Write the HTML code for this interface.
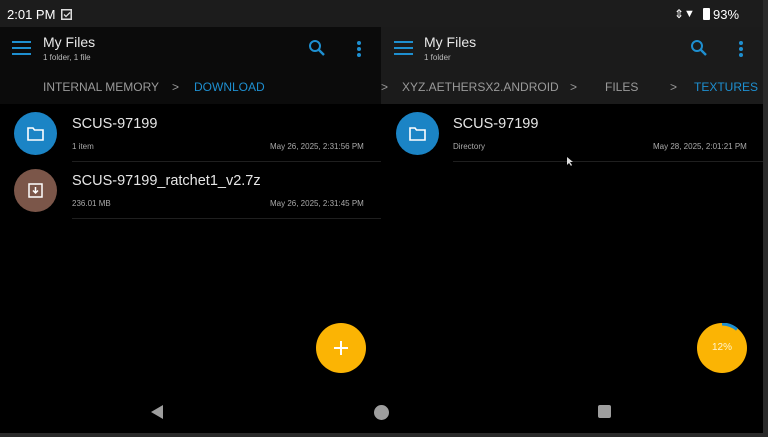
<!DOCTYPE html>
<html><head><style>
*{margin:0;padding:0;box-sizing:border-box}
body{width:768px;height:437px;background:#000;font-family:"Liberation Sans",sans-serif;position:relative;overflow:hidden;color:#e8e8e8}
.a{position:absolute}
.sb{left:0;top:0;width:768px;height:27px;background:#1c1c1c}
.rh{left:381px;top:27px;width:382px;height:77px;background:#1b1b1b}
.lh{left:0;top:27px;width:381px;height:77px;background:#0b0b0b}
.edge{left:763px;top:0;width:5px;height:437px;background:#2a2a2a}
.bot{left:0;top:433px;width:768px;height:4px;background:#2a2a2a}
.ham{width:19px;height:14px;border-top:2px solid #1e8fd0;border-bottom:2px solid #1e8fd0}
.ham:after{content:"";position:absolute;left:0;top:4px;width:19px;height:2px;background:#1e8fd0}
.t{font-size:14px;color:#e8e8e8}
.s{font-size:8px;color:#bbb}
.bc{font-size:12px;color:#9a9a9a;top:80px}
.blue{color:#1e8fd0}
.circ{width:43px;height:43px;border-radius:50%}
.nm{font-size:14.5px;color:#e6e6e6}
.meta{font-size:8px;color:#aaa}
.line{height:1px;background:#1f1f1f}
.dots i{display:block;width:4px;height:4px;border-radius:50%;background:#1e8fd0;margin-bottom:2px}
.fab{width:50px;height:50px;border-radius:50%;background:#fbb404}
</style></head><body>
<div class="a sb"></div>
<div class="a lh"></div>
<div class="a rh"></div>
<div class="a edge"></div>
<div class="a bot"></div>
<div class="a" style="left:7px;top:7px;font-size:13px;color:#fff">2:01 PM</div>
<svg class="a" style="left:61px;top:9px" width="11" height="11"><rect x="0.75" y="0.75" width="9.5" height="9.5" fill="none" stroke="#ddd" stroke-width="1.5"/><path d="M3 5.5l2 2 4-4" stroke="#ddd" stroke-width="1.3" fill="none"/></svg>
<div class="a" style="left:674px;top:7px;font-size:12px;color:#fff">⇕</div>
<div class="a" style="left:684px;top:8px;font-size:11px;color:#fff">▼</div>
<div class="a" style="left:703px;top:8px;width:7px;height:12px;background:#fff;border-radius:1px"></div>
<div class="a" style="left:713px;top:7px;font-size:13px;color:#fff">93%</div>

<div class="a ham" style="left:12px;top:41px"></div>
<div class="a t" style="left:43px;top:34px">My Files</div>
<div class="a s" style="left:43px;top:53px">1 folder, 1 file</div>
<svg class="a" style="left:308px;top:39px" width="18" height="18" viewBox="0 0 18 18"><circle cx="7" cy="7" r="5" fill="none" stroke="#1e8fd0" stroke-width="2"/><path d="M11 11l5 5" stroke="#1e8fd0" stroke-width="2.4"/></svg>
<div class="a dots" style="left:357px;top:41px"><i></i><i></i><i></i></div>
<div class="a bc" style="left:43px">INTERNAL MEMORY</div>
<div class="a bc" style="left:172px">&gt;</div>
<div class="a bc blue" style="left:194px">DOWNLOAD</div>

<div class="a circ" style="left:14px;top:112px;background:#1b84c5"></div>
<svg class="a" style="left:27px;top:127px" width="17" height="14"><path d="M1 1h5l1.5 2H16v10H1z" fill="none" stroke="#fff" stroke-width="1.6"/></svg>
<div class="a nm" style="left:72px;top:116px">SCUS-97199</div>
<div class="a meta" style="left:72px;top:142px">1 item</div>
<div class="a meta" style="left:270px;top:142px">May 26, 2025, 2:31:56 PM</div>
<div class="a line" style="left:72px;top:161px;width:309px"></div>
<div class="a circ" style="left:14px;top:169px;background:#7b5649"></div>
<svg class="a" style="left:28px;top:183px" width="15" height="15"><rect x="1" y="1" width="13" height="13" fill="none" stroke="#fff" stroke-width="1.5"/><path d="M7.5 4v6M5 7.5l2.5 2.5 2.5-2.5" stroke="#fff" stroke-width="1.5" fill="none"/></svg>
<div class="a nm" style="left:72px;top:173px">SCUS-97199_ratchet1_v2.7z</div>
<div class="a meta" style="left:72px;top:199px">236.01 MB</div>
<div class="a meta" style="left:270px;top:199px">May 26, 2025, 2:31:45 PM</div>
<div class="a line" style="left:72px;top:218px;width:309px"></div>
<div class="a fab" style="left:316px;top:323px"></div>
<svg class="a" style="left:316px;top:323px" width="50" height="50"><path d="M25 18v14M18 25h14" stroke="#fff" stroke-width="2"/></svg>

<div class="a ham" style="left:394px;top:41px"></div>
<div class="a t" style="left:424px;top:34px">My Files</div>
<div class="a s" style="left:424px;top:53px">1 folder</div>
<svg class="a" style="left:690px;top:39px" width="18" height="18" viewBox="0 0 18 18"><circle cx="7" cy="7" r="5" fill="none" stroke="#1e8fd0" stroke-width="2"/><path d="M11 11l5 5" stroke="#1e8fd0" stroke-width="2.4"/></svg>
<div class="a dots" style="left:739px;top:41px"><i></i><i></i><i></i></div>
<div class="a bc" style="left:381px">&gt;</div>
<div class="a bc" style="left:402px">XYZ.AETHERSX2.ANDROID</div>
<div class="a bc" style="left:570px">&gt;</div>
<div class="a bc" style="left:605px">FILES</div>
<div class="a bc" style="left:670px">&gt;</div>
<div class="a bc blue" style="left:694px">TEXTURES</div>
<div class="a circ" style="left:396px;top:112px;background:#1b84c5"></div>
<svg class="a" style="left:409px;top:127px" width="17" height="14"><path d="M1 1h5l1.5 2H16v10H1z" fill="none" stroke="#fff" stroke-width="1.6"/></svg>
<div class="a nm" style="left:453px;top:116px">SCUS-97199</div>
<div class="a meta" style="left:453px;top:142px">Directory</div>
<div class="a meta" style="left:653px;top:142px">May 28, 2025, 2:01:21 PM</div>
<div class="a line" style="left:453px;top:161px;width:310px"></div>
<svg class="a" style="left:566px;top:157px" width="8" height="10"><path d="M1 0v8l2-2 2 3 1-1-2-3h3z" fill="#ddd"/></svg>
<div class="a fab" style="left:697px;top:323px"></div>
<svg class="a" style="left:697px;top:323px" width="50" height="50"><path d="M25 1A24 24 0 0 1 40 6.5" stroke="#1e8fd0" stroke-width="3" fill="none"/></svg>
<div class="a" style="left:697px;top:342px;width:50px;text-align:center;font-size:10px;color:#fff5d0">12%</div>

<svg class="a" style="left:149px;top:404px" width="16" height="16"><path d="M14 1L2 8l12 7z" fill="#9e9e9e"/></svg>
<div class="a" style="left:374px;top:405px;width:15px;height:15px;border-radius:50%;background:#9e9e9e"></div>
<div class="a" style="left:598px;top:405px;width:13px;height:13px;border-radius:2px;background:#9e9e9e"></div>
</body></html>
